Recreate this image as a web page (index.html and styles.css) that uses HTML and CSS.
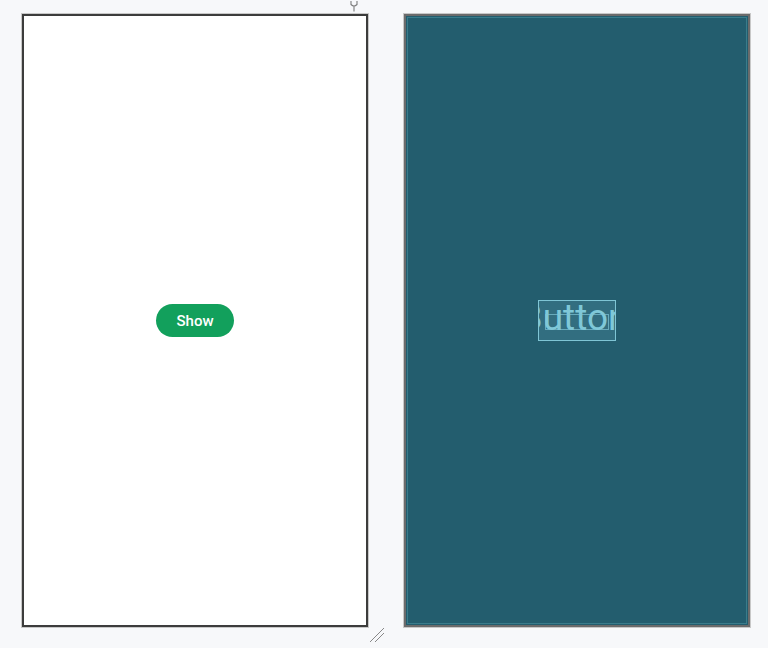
FILE: index.html
```html
<!DOCTYPE html>
<html>
<head>
<meta charset="utf-8">
<link rel="stylesheet" href="styles.css">
</head>
<body>
<div class="editor">
  <svg class="pin" width="12" height="12" viewBox="0 0 12 12">
    <path d="M3 1 L3 4.5 Q6 7.5 9 4.5 L9 1 M6 6.5 L6 11.5" fill="none" stroke="#7a7a7a" stroke-width="1.1"/>
  </svg>
  <div class="frame design">
    <button class="show">Show</button>
  </div>
  <div class="frame blueprint">
    <div class="bp-inner">
      <div class="bp-button">
        <span class="bp-text">Button</span>
        <div class="bp-textbox"></div>
      </div>
    </div>
  </div>
  <svg class="resize" width="16" height="16" viewBox="0 0 16 16">
    <path d="M1 15 L15 1 M6 15 L15 6" stroke="#888" stroke-width="1" fill="none"/>
  </svg>
</div>
</body>
</html>
```
FILE: styles.css
```css
html, body {
  margin: 0;
  padding: 0;
  background: #f7f8fa;
  font-family: Roboto, "Liberation Sans", sans-serif;
}
.editor {
  position: relative;
  width: 768px;
  height: 648px;
  box-sizing: border-box;
  padding: 14px 0 0 22px;
  display: flex;
  gap: 36px;
  align-items: flex-start;
}
.frame {
  width: 346px;
  height: 613px;
  box-sizing: border-box;
  display: flex;
  align-items: center;
  justify-content: center;
}
.design {
  background: #fff;
  border: 2px solid #3c3c3c;
  box-shadow: 0 0 0 1px #c8c8c8;
}
.show {
  width: 78px;
  height: 33px;
  border: none;
  border-radius: 17px;
  background: #12a05c;
  color: #fff;
  font-family: Roboto, "Liberation Sans", sans-serif;
  font-size: 15px;
  font-weight: 500;
  padding: 0;
}
.blueprint {
  background: #235d6e;
  border: 2px solid #6b6b6b;
  box-shadow: 0 0 0 1px #c8c8c8;
  padding: 1px;
}
.bp-inner {
  width: 100%;
  height: 100%;
  box-sizing: border-box;
  border: 1px solid #3a7c8b;
  display: flex;
  align-items: center;
  justify-content: center;
}
.bp-button {
  position: relative;
  width: 78px;
  height: 41px;
  box-sizing: border-box;
  border: 1px solid #7fc5d5;
  background: rgba(120, 190, 210, 0.18);
  overflow: hidden;
  display: flex;
  align-items: center;
  justify-content: center;
  margin-top: -1px;
}
.bp-text {
  font-size: 37px;
  color: #7fc8d8;
  white-space: nowrap;
  line-height: 1;
  margin-top: -5px;
  margin-left: -6px;
}
.bp-textbox {
  position: absolute;
  left: 6px;
  top: 13px;
  width: 64px;
  height: 16px;
  box-sizing: border-box;
  border: 1px solid rgba(127, 197, 213, 0.7);
}
.pin {
  position: absolute;
  left: 348px;
  top: 0;
}
.resize {
  position: absolute;
  left: 369px;
  top: 627px;
}
```
